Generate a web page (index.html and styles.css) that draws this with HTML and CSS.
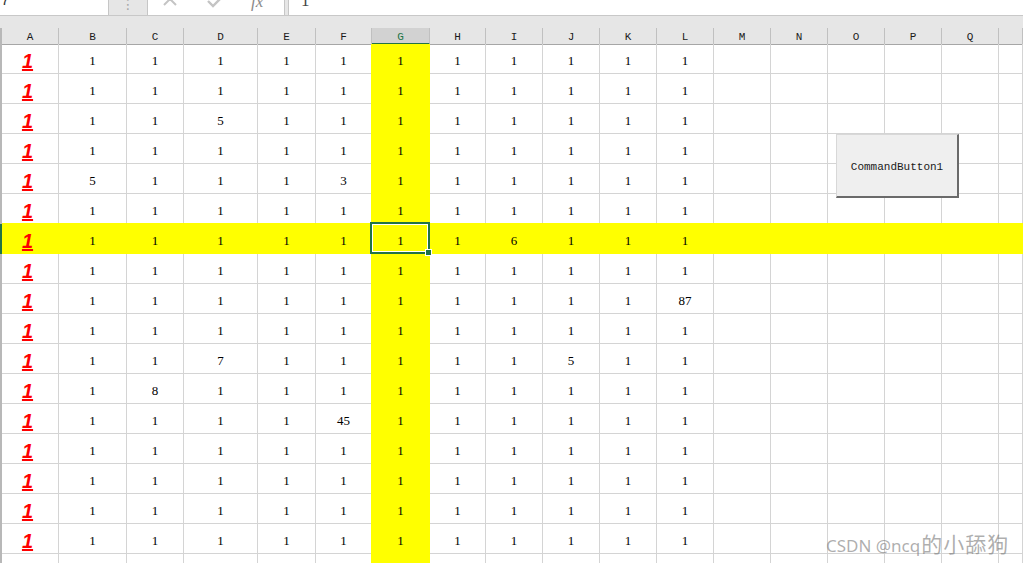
FILE: index.html
```html
<!DOCTYPE html>
<html>
<head>
<meta charset="utf-8">
<link rel="stylesheet" href="styles.css">
</head>
<body>
<div class="topbar">
  <div class="namebox"><span class="nb-text">7</span><span class="nb-arrow">▾</span></div>
  <div class="grip">⋮</div>
  <div class="btnbox">
    <svg class="ic-x" width="16" height="16" viewBox="0 0 16 16"><path d="M2 2 L14 14 M14 2 L2 14" stroke="#c4c4c4" stroke-width="2" fill="none"/></svg>
    <svg class="ic-ok" width="16" height="16" viewBox="0 0 16 16"><path d="M1 7 L6 12 L15 3" stroke="#c4c4c4" stroke-width="2.4" fill="none"/></svg>
    <span class="fx">fx</span>
  </div>
  <div class="formula"><span class="f-text">1</span></div>
</div>
<div class="band"></div>
<div class="hd">
  <span>A</span><span>B</span><span>C</span><span>D</span><span>E</span><span>F</span><span>G</span><span>H</span><span>I</span><span>J</span><span>K</span><span>L</span><span>M</span><span>N</span><span>O</span><span>P</span><span>Q</span><span></span>
</div>
<div class="sheet">
<div class="r"><span>1</span><span>1</span><span>1</span><span>1</span><span>1</span><span>1</span><span>1</span><span>1</span><span>1</span><span>1</span><span>1</span><span>1</span><span></span><span></span><span></span><span></span><span></span><span></span></div>
<div class="r"><span>1</span><span>1</span><span>1</span><span>1</span><span>1</span><span>1</span><span>1</span><span>1</span><span>1</span><span>1</span><span>1</span><span>1</span><span></span><span></span><span></span><span></span><span></span><span></span></div>
<div class="r"><span>1</span><span>1</span><span>1</span><span>5</span><span>1</span><span>1</span><span>1</span><span>1</span><span>1</span><span>1</span><span>1</span><span>1</span><span></span><span></span><span></span><span></span><span></span><span></span></div>
<div class="r"><span>1</span><span>1</span><span>1</span><span>1</span><span>1</span><span>1</span><span>1</span><span>1</span><span>1</span><span>1</span><span>1</span><span>1</span><span></span><span></span><span></span><span></span><span></span><span></span></div>
<div class="r"><span>1</span><span>5</span><span>1</span><span>1</span><span>1</span><span>3</span><span>1</span><span>1</span><span>1</span><span>1</span><span>1</span><span>1</span><span></span><span></span><span></span><span></span><span></span><span></span></div>
<div class="r"><span>1</span><span>1</span><span>1</span><span>1</span><span>1</span><span>1</span><span>1</span><span>1</span><span>1</span><span>1</span><span>1</span><span>1</span><span></span><span></span><span></span><span></span><span></span><span></span></div>
<div class="r hl"><span>1</span><span>1</span><span>1</span><span>1</span><span>1</span><span>1</span><span><span class="sel"></span>1</span><span>1</span><span>6</span><span>1</span><span>1</span><span>1</span><span></span><span></span><span></span><span></span><span></span><span></span></div>
<div class="r"><span>1</span><span>1</span><span>1</span><span>1</span><span>1</span><span>1</span><span>1</span><span>1</span><span>1</span><span>1</span><span>1</span><span>1</span><span></span><span></span><span></span><span></span><span></span><span></span></div>
<div class="r"><span>1</span><span>1</span><span>1</span><span>1</span><span>1</span><span>1</span><span>1</span><span>1</span><span>1</span><span>1</span><span>1</span><span>87</span><span></span><span></span><span></span><span></span><span></span><span></span></div>
<div class="r"><span>1</span><span>1</span><span>1</span><span>1</span><span>1</span><span>1</span><span>1</span><span>1</span><span>1</span><span>1</span><span>1</span><span>1</span><span></span><span></span><span></span><span></span><span></span><span></span></div>
<div class="r"><span>1</span><span>1</span><span>1</span><span>7</span><span>1</span><span>1</span><span>1</span><span>1</span><span>1</span><span>5</span><span>1</span><span>1</span><span></span><span></span><span></span><span></span><span></span><span></span></div>
<div class="r"><span>1</span><span>1</span><span>8</span><span>1</span><span>1</span><span>1</span><span>1</span><span>1</span><span>1</span><span>1</span><span>1</span><span>1</span><span></span><span></span><span></span><span></span><span></span><span></span></div>
<div class="r"><span>1</span><span>1</span><span>1</span><span>1</span><span>1</span><span>45</span><span>1</span><span>1</span><span>1</span><span>1</span><span>1</span><span>1</span><span></span><span></span><span></span><span></span><span></span><span></span></div>
<div class="r"><span>1</span><span>1</span><span>1</span><span>1</span><span>1</span><span>1</span><span>1</span><span>1</span><span>1</span><span>1</span><span>1</span><span>1</span><span></span><span></span><span></span><span></span><span></span><span></span></div>
<div class="r"><span>1</span><span>1</span><span>1</span><span>1</span><span>1</span><span>1</span><span>1</span><span>1</span><span>1</span><span>1</span><span>1</span><span>1</span><span></span><span></span><span></span><span></span><span></span><span></span></div>
<div class="r"><span>1</span><span>1</span><span>1</span><span>1</span><span>1</span><span>1</span><span>1</span><span>1</span><span>1</span><span>1</span><span>1</span><span>1</span><span></span><span></span><span></span><span></span><span></span><span></span></div>
<div class="r"><span>1</span><span>1</span><span>1</span><span>1</span><span>1</span><span>1</span><span>1</span><span>1</span><span>1</span><span>1</span><span>1</span><span>1</span><span></span><span></span><span></span><span></span><span></span><span></span></div>
<div class="r"><span>1</span><span>1</span><span>1</span><span>1</span><span>1</span><span>1</span><span>1</span><span>1</span><span>1</span><span>1</span><span>1</span><span>1</span><span></span><span></span><span></span><span></span><span></span><span></span></div>
</div>
<div class="cmdbtn">CommandButton1</div>
<div class="watermark">CSDN @ncq<span class="cjk">的小舔狗</span></div>
</body>
</html>
```
FILE: styles.css
```css
html, body {
  margin: 0;
  padding: 0;
  width: 1023px;
  height: 563px;
  overflow: hidden;
  background: #fff;
}
body {
  position: relative;
  font-family: "Liberation Mono", monospace;
}

/* formula bar (cut at top) */
.topbar {
  display: flex;
  background: #e6e6e6;
  border-bottom: 1px solid #c8c8c8;
  box-sizing: border-box;
  height: 16px;
}
.namebox {
  width: 108px;
  background: #fff;
  border-right: 1px solid #c6c6c6;
  position: relative;
  overflow: hidden;
}
.nb-text {
  position: absolute;
  left: 1px;
  top: -9px;
  font: 15px "Liberation Sans", sans-serif;
  color: #333;
}
.nb-arrow {
  position: absolute;
  left: 94px;
  top: -9px;
  font: 10px "DejaVu Sans", sans-serif;
  color: #777;
}
.grip {
  width: 38px;
  text-align: center;
  color: #a8a8a8;
  font: 14px "DejaVu Sans", sans-serif;
  line-height: 8px;
  overflow: hidden;
}
.btnbox {
  width: 136px;
  background: #fff;
  border-left: 1px solid #c6c6c6;
  border-right: 1px solid #c6c6c6;
  position: relative;
  overflow: hidden;
}
.ic-x { position: absolute; left: 14px; top: -9px; }
.ic-ok { position: absolute; left: 59px; top: -6px; }
.fx {
  position: absolute;
  left: 103px;
  top: -8px;
  font: italic 17px "Liberation Serif", serif;
  color: #8a8a8a;
}
.formula {
  flex: 1;
  margin-left: 3px;
  background: #fff;
  border-left: 1px solid #c6c6c6;
  position: relative;
  overflow: hidden;
}
.f-text {
  position: absolute;
  left: 12px;
  top: -9px;
  font: 17px "Liberation Serif", serif;
  color: #444;
}

.band {
  height: 12px;
  background: #e6e6e6;
}

.hd, .r {
  display: grid;
  grid-template-columns: 57px 68px 57px 74px 58px 56px 58px 56px 57px 57px 57px 57px 57px 57px 57px 57px 57px 1fr;
  border-left: 2px solid #b8b8b8;
}
.hd {
  height: 16px;
  background: #e6e6e6;
}
.hd > span {
  box-sizing: border-box;
  border-right: 1px solid #c0c0c0;
  border-bottom: 1px solid #a6a6a6;
  display: flex;
  align-items: center;
  justify-content: center;
  font-size: 11px;
  color: #1a1a1a;
  padding-top: 2px;
}
.hd > span:nth-child(7) {
  background: #d2d2d2;
  border-bottom: 2px solid #217346;
  color: #217346;
  padding-top: 3px;
}

.r {
  height: 30px;
}
.r > span {
  box-sizing: border-box;
  border-right: 1px solid #d4d4d4;
  border-bottom: 1px solid #d4d4d4;
  display: flex;
  align-items: flex-end;
  justify-content: center;
  font: 13px "Liberation Serif", serif;
  line-height: 15px;
  padding-bottom: 5px;
  color: #000;
}
.r > span:first-child {
  font: italic bold 20px "Liberation Sans", sans-serif;
  color: #ff0000;
  text-decoration: underline;
  line-height: 22px;
  padding-bottom: 1px;
  padding-right: 5px;
}
.r > span:nth-child(7) {
  background: #ffff00;
  border-right-color: #ffff00;
  border-bottom-color: #ffff00;
  box-shadow: -1px 0 0 #ffff00;
}
.r.hl {
  border-left-color: #217346;
}
.hl > span {
  background: #ffff00;
  border-right-color: #ffff00;
  border-bottom-color: #ffff00;
  box-shadow: 0 -1px 0 #ffff00;
}
.hl > span:nth-child(7) {
  position: relative;
  box-shadow: -1px 0 0 #ffff00, 0 -1px 0 #ffff00, -1px -1px 0 #ffff00;
}
.sel {
  position: absolute;
  left: -2px;
  top: -2px;
  right: -1px;
  bottom: -1px;
  border: 2px solid #217346;
  box-shadow: inset 0 0 0 1px #fff;
}
.sel::after {
  content: "";
  position: absolute;
  right: -4px;
  bottom: -4px;
  width: 5px;
  height: 5px;
  background: #217346;
  border: 1px solid #fff;
}

.cmdbtn {
  position: absolute;
  left: 836px;
  top: 134px;
  width: 123px;
  height: 64px;
  box-sizing: border-box;
  padding-top: 3px;
  background: #efefef;
  border-top: 1px solid #d8d8d8;
  border-left: 1px solid #d8d8d8;
  border-right: 2px solid #6a6a6a;
  border-bottom: 2px solid #6a6a6a;
  display: flex;
  align-items: center;
  justify-content: center;
  font-size: 11px;
  color: #1a1a1a;
}

.watermark {
  position: absolute;
  left: 826px;
  top: 528px;
  font: 17px "Noto Sans", "Noto Sans CJK SC", sans-serif;
  color: rgba(120, 120, 120, 0.6);
  white-space: nowrap;
}
.watermark .cjk {
  font-size: 21px;
  font-family: "Noto Sans CJK SC", sans-serif;
  margin-left: 1px;
  letter-spacing: 1px;
}
```
